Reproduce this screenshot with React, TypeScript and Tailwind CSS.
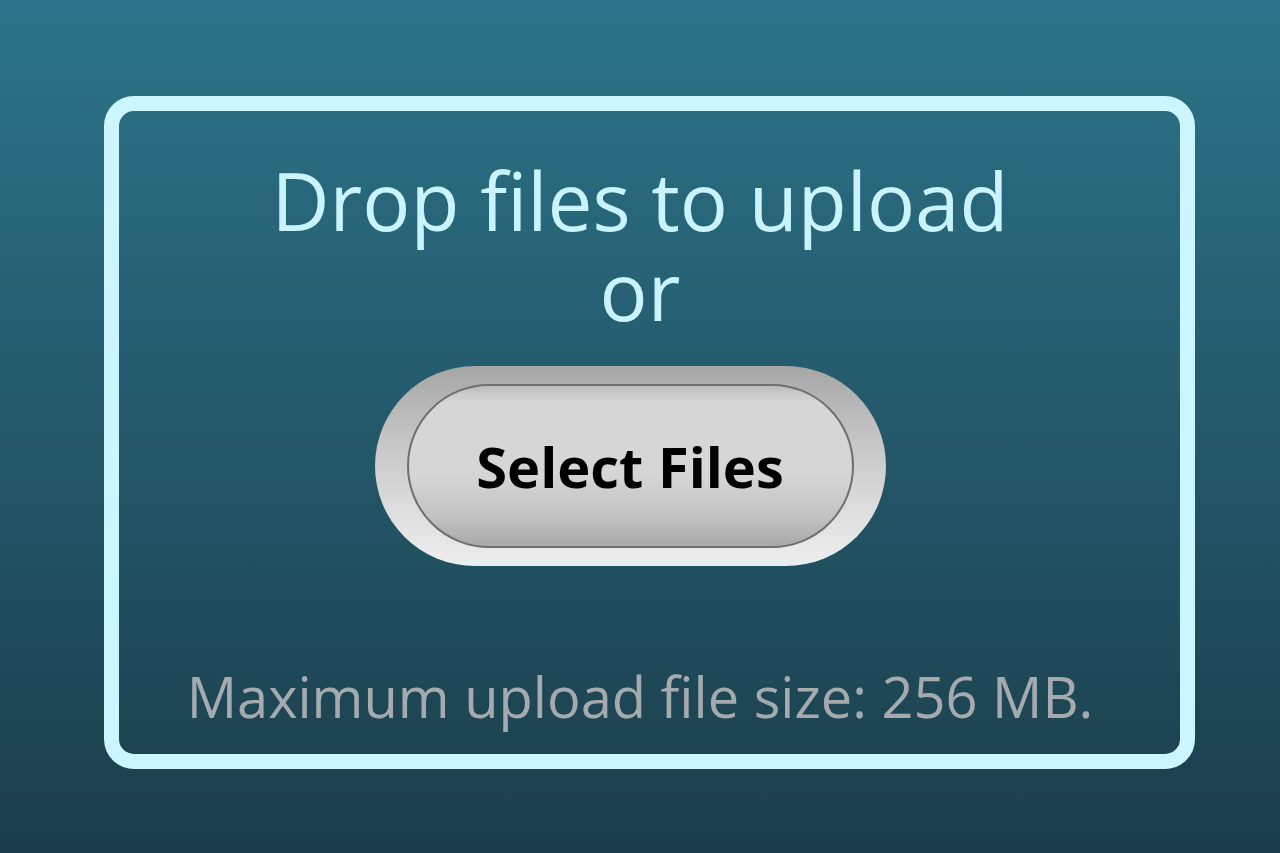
export default function App() {
  return (
    <div
      className="h-[853px] w-[1280px] overflow-hidden bg-[linear-gradient(to_bottom,#2c7489,#1b3d4b)] pt-[96px] pl-[104px]"
      style={{ fontFamily: '"Open Sans", "Noto Sans", sans-serif' }}
    >
      <div className="flex h-[673px] w-[1091px] flex-col items-center rounded-[30px] border-[15px] border-[#ccf6ff] pt-[44px] pr-[19px] pb-[30px]">
        <h1 className="text-center text-[80px] leading-[90px] font-normal text-[#c9f4fd]">
          Drop files to upload
          <br />
          or
        </h1>

        <button className="mt-[31px] mr-[20px] rounded-full bg-[linear-gradient(to_bottom,#a6a6a6_0%,#c4c4c4_35%,#dcdcdc_70%,#ececec_96%,#e4f0f2_100%)] px-[32px] py-[18px]">
          <span className="flex h-[164px] w-[447px] items-center justify-center rounded-full border-2 border-[#6f6f6f] bg-[linear-gradient(to_bottom,#bdbdbd_0%,#d6d6d6_10%,#d6d6d6_55%,#c4c4c4_80%,#a9a9a9_100%)] text-[56px] leading-none font-bold text-black">
            Select Files
          </span>
        </button>

        <p className="mt-auto text-[56px] leading-[56px] text-[#a4aaae]">
          Maximum upload file size: 256 MB.
        </p>
      </div>
    </div>
  );
}
